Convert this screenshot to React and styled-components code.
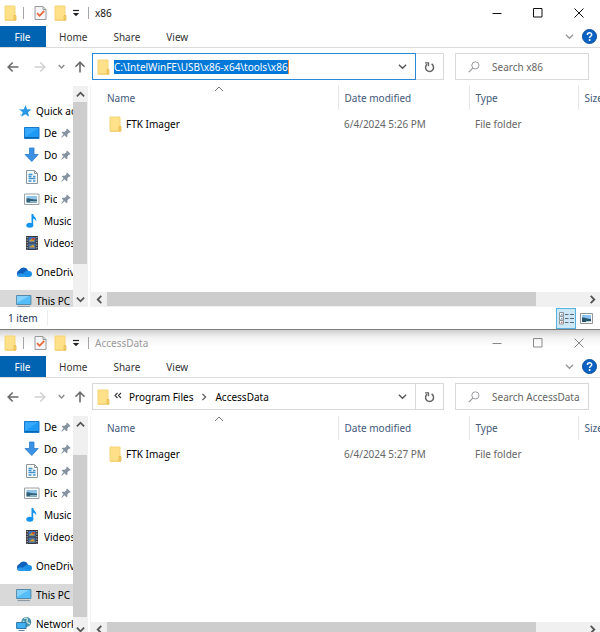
import * as React from "react"
import { useEffect, useRef } from "react"
import { styled, createGlobalStyle } from "styled-components"

const quickItems = [
    { name: 'Desktop', icon: 'desktop', pinned: true },
    { name: 'Downloads', icon: 'downloads', pinned: true },
    { name: 'Documents', icon: 'documents', pinned: true },
    { name: 'Pictures', icon: 'pictures', pinned: true },
    { name: 'Music', icon: 'music' },
    { name: 'Videos', icon: 'videos' },
];

const rootItems = [
    { name: 'OneDrive', icon: 'onedrive' },
    { name: 'This PC', icon: 'pc', selected: true },
    { name: 'Network', icon: 'network' },
];

const FolderIcon = () => (
    <svg width="13" height="16" viewBox="0 0 13 16">
        <path d="M1 1h10v14H1z" fill="#ffe18a" stroke="#f5d478" />
        <path d="M10 10.500h2v4.500h-2z" fill="#f7d36c" stroke="#e6b94c" strokeWidth="0.8" />
        <path d="M1 15.300h11" stroke="#efc65f" strokeWidth="0.8" />
    </svg>
)

const CheckPageIcon = () => (
    <svg width="13" height="16" viewBox="0 0 13 16">
        <path d="M1 1.500h8l3 3v10H1z" fill="#f5f6f9" stroke="#9a9a9a" />
        <path d="M9 1.500v3h3" fill="none" stroke="#9a9a9a" />
        <path d="M3 8.200l2.600 2.600 4.600-5" fill="none" stroke="#e8683a" strokeWidth="1.800" />
    </svg>
)

const CustomizeIcon = () => (
    <svg width="8" height="8" viewBox="0 0 8 8">
        <path d="M1 1.500h6" stroke="#222" strokeWidth="1.200" />
        <path d="M0.800 4h6.400L4 7.200z" fill="#222" />
    </svg>
)

const Chevron = ({ dir = 'down', size = 9, color = '#555', weight = 1.5 }) => {
    const paths = {
        down: 'M1 3l4 4 4-4',
        up: 'M1 7l4-4 4 4',
        left: 'M7 1L3 5l4 4',
        right: 'M3 1l4 4-4 4',
    };
    return (
        <svg width={size} height={size} viewBox="0 0 10 10">
            <path d={paths[dir]} fill="none" stroke={color} strokeWidth={weight} />
        </svg>
    )
}

const OverflowIcon = () => (
    <svg width="8" height="9" viewBox="0 0 8 9">
        <path d="M3.500 1L1 3.500 3.500 6M7 1L4.500 3.500 7 6" fill="none" stroke="#333" strokeWidth="1.100" />
    </svg>
)

const ArrowIcon = ({ dir, color = '#6b6b6b' }) => {
    const paths = {
        left: 'M11.500 6H1.200M5.700 1.500L1.200 6l4.500 4.500',
        right: 'M0.500 6h10.300M6.300 1.500L10.800 6l-4.500 4.500',
        up: 'M6 11.500V1.200M1.500 5.700L6 1.200l4.500 4.500',
    };
    return (
        <svg width="12" height="12" viewBox="0 0 12 12">
            <path d={paths[dir]} fill="none" stroke={color} strokeWidth="1.600" />
        </svg>
    )
}

const RefreshIcon = () => (
    <svg width="11" height="12" viewBox="0 0 11 12">
        <path d="M3.200 3.200A4 4 0 1 0 7.600 3" fill="none" stroke="#666" strokeWidth="1.500" />
        <path d="M1 1.800h3.500v3.400" fill="none" stroke="#666" strokeWidth="1.300" />
    </svg>
)

const SearchIcon = () => (
    <svg width="12" height="12" viewBox="0 0 12 12">
        <circle cx="7.400" cy="4.400" r="3.600" fill="none" stroke="#9a9a9f" />
        <path d="M4.800 7.200L0.800 11.200" stroke="#9a9a9f" strokeWidth="1.200" />
    </svg>
)

const HelpIcon = () => (
    <svg width="15" height="15" viewBox="0 0 15 15">
        <circle cx="7.500" cy="7.500" r="7" fill="#0b62c4" stroke="#0a4f9c" />
        <path d="M5.400 5.900c0-2.800 4.300-2.700 4.300-.2 0 1.600-2.100 1.500-2.100 3.300" fill="none" stroke="#fff" strokeWidth="1.500" />
        <circle cx="7.600" cy="11" r="1" fill="#fff" />
    </svg>
)

const PinIcon = () => (
    <svg width="10" height="10" viewBox="0 0 10 10">
        <path d="M6 0.400L9.700 4l-1 .7-.7-.1-1.600 1.800.1 2-1 .9-1.900-2L.8 9.700l-.5-.4L2.500 6.300.7 4.600l.9-.9 2.100.1L5.500 2.200 5.300 1.300z" fill="#8592a0" />
    </svg>
)

const NavIcon = ({ name }) => (
    <svg width="16" height="16" viewBox="0 0 16 16">
        {name === 'star' && (
            <>
                <path d="M9.500 2l1.600 4.200 4.400.300-3.500 2.800 1.200 4.500-3.900-2.500-3.900 2.500 1.300-4.500L3.300 6.500l4.500-.3z" fill="#2698e4" />
                <path d="M3 6.500h3M4 12h2" stroke="#7cc4f2" />
            </>
        )}
        {name === 'desktop' && (
            <>
                <path d="M.5 2.500h14.500v11H.5z" fill="#1e9af5" stroke="#1779c9" />
                <path d="M1 3h13.500L1 12z" fill="#36a8fb" />
                <path d="M1 12.500h13.500" stroke="#0b66b0" />
            </>
        )}
        {name === 'downloads' && (
            <path d="M5.500 1h4.500v6.500h4.200L7.800 14.500 1 7.500h4.500z" fill="#3b92e4" stroke="#2a7ccb" strokeWidth="0.800" />
        )}
        {name === 'documents' && (
            <>
                <path d="M2.500 1.500h8l3 3v10h-11z" fill="#fbfbfb" stroke="#8d959c" />
                <path d="M10.500 1.500v3h3" fill="none" stroke="#8d959c" />
                <path d="M4.500 5.500h4M4.500 7.500h3M9 7.500h2.500M4.500 9.500h7M4.500 12h3M9 12h2.500" stroke="#3f94cf" strokeWidth="1.300" />
            </>
        )}
        {name === 'pictures' && (
            <>
                <path d="M.5 3h14.500v10.500H.5z" fill="#fff" stroke="#98a1a8" />
                <path d="M2.500 5h10.500v6.500H2.500z" fill="#8ec3ea" />
                <path d="M2.500 7.500c3-1 5 1.500 10.500 1v3H2.500z" fill="#315f78" />
                <path d="M6 10h7v1.500H6z" fill="#8db7c4" />
            </>
        )}
        {name === 'music' && (
            <>
                <ellipse cx="5.800" cy="12.300" rx="3.500" ry="2.500" fill="#1294ee" />
                <path d="M7.500 1h1.700c.3 3 4 3.500 2.900 7.700-.300-2-1.600-2.700-2.900-2.900v6.500H7.500z" fill="#1294ee" />
            </>
        )}
        {name === 'videos' && (
            <>
                <path d="M2 1h12v14H2z" fill="#38383d" />
                <path d="M4.500 2h7v5.500h-7z" fill="#3973bd" />
                <path d="M4.500 8.500h7V14h-7z" fill="#4a72a5" />
                <path d="M5 6l3-2.500 3 3H5zM5 12.500l4-3 2 3z" fill="#d09a35" />
                <path d="M8 3h3v2H8z" fill="#b8523a" />
                <path d="M3.200 2v13M12.800 2v13" stroke="#c8c8c8" strokeWidth="1" strokeDasharray="1.200 1.300" />
            </>
        )}
        {name === 'onedrive' && (
            <>
                <path d="M3 12.500A3.500 3.500 0 0 1 3.300 6 4.800 4.800 0 0 1 12 6.500l-3 6z" fill="#0f5fbd" />
                <path d="M3 12.800L10 7a3 3 0 0 1 3 0 3 3 0 0 1 0 6z" fill="#1b8fe8" />
                <path d="M1 11.500c1-2.500 4-3 6-1.500l5 2.800H3.500c-1.300 0-2-.4-2.500-1.300z" fill="#2899ea" />
            </>
        )}
        {name === 'pc' && (
            <>
                <path d="M.6 2.500h14.300v9H.6z" fill="#55bdf8" stroke="#5689a8" />
                <path d="M1 3h12L1 10z" fill="#83d2fd" />
                <path d="M1.500 13.500h12.500" stroke="#8d9ba6" strokeWidth="1.200" />
            </>
        )}
        {name === 'network' && (
            <>
                <circle cx="10.300" cy="6" r="5" fill="#4c93ae" />
                <path d="M8 2.500c3-1.500 4 1 3 2.500s2 2 3 3M7 5l2 2" fill="none" stroke="#bfe0e3" strokeWidth="1.300" />
                <path d="M.6 6.500h9.500v6H.6z" fill="#40b0f2" stroke="#2d79a8" />
                <path d="M2.500 14.500h6" stroke="#5f88a2" />
            </>
        )}
    </svg>
)

const DetailsIcon = () => (
    <svg width="15" height="13" viewBox="0 0 15 13">
        <path d="M.5.500h4v3.500h-4zM.5 4.500h4V8h-4zM.5 8.500h4V12h-4z" fill="#fff" stroke="#8d9296" />
        <path d="M2 2.300h1.500M2 6.300h1.500" stroke="#4c78b3" />
        <path d="M2 10.300h1.500" stroke="#c23a3a" />
        <path d="M6 2.500h3.500M11 2.500h4M6 6.500h3.500M11 6.500h4M6 10.500h3.500M11 10.500h4" stroke="#5d6b73" />
    </svg>
)

const ThumbsIcon = () => (
    <svg width="13" height="11" viewBox="0 0 13 11">
        <path d="M.5.500h12v10H.5z" fill="#fff" stroke="#8f9598" />
        <path d="M2 2h9v7H2z" fill="#8dc3f4" />
        <path d="M2 4.500c3-.5 5 1.500 9 1.500v3H2z" fill="#27556c" />
        <path d="M6 8h5v1H6z" fill="#a9d3da" />
    </svg>
)

const NavRow = ({ item, level }) => (
    <NavItem $selected={item.selected}>
        <NavLink href="#" $level={level}>
            <NavIcon name={item.icon} />
            <NavText $pinned={item.pinned}>{item.name}</NavText>
            {item.pinned && <PinIcon />}
        </NavLink>
    </NavItem>
)

const AddressInput = ({ path }) => {
    const input = useRef(null);

    useEffect(() => {
        input.current.focus();
        input.current.select();
    }, []);

    return <PathInput ref={input} aria-label="Address" defaultValue={path} spellCheck={false} />
}

const ExplorerWindow = ({ title, active, path, crumbs, modified, showQuick, thumbTop }) => (
    <Window>
        <TitleBar $active={active}>
            <FolderIcon />
            <Divider />
            <QuickButton aria-label="Properties"><CheckPageIcon /></QuickButton>
            <QuickButton aria-label="New folder"><FolderIcon /></QuickButton>
            <QuickButton aria-label="Customize" $narrow><CustomizeIcon /></QuickButton>
            <Divider />
            <Title $active={active}>{title}</Title>
            <WindowButtons $active={active}>
                <WindowButton aria-label="Minimize">
                    <svg width="10" height="10"><path d="M0.500 5.500h9" stroke="currentColor" /></svg>
                </WindowButton>
                <WindowButton aria-label="Maximize">
                    <svg width="10" height="10"><path d="M.5.500h8.500v8.500H.5z" fill="none" stroke="currentColor" /></svg>
                </WindowButton>
                <WindowButton aria-label="Close">
                    <svg width="10" height="10"><path d="M.5.500l9 9M9.500.500l-9 9" stroke="currentColor" /></svg>
                </WindowButton>
            </WindowButtons>
        </TitleBar>

        <Ribbon>
            <FileTab>File</FileTab>
            <Tab>Home</Tab>
            <Tab>Share</Tab>
            <Tab>View</Tab>
            <RibbonEnd>
                <IconButton aria-label="Expand ribbon"><Chevron color="#999" /></IconButton>
                <IconButton aria-label="Help"><HelpIcon /></IconButton>
            </RibbonEnd>
        </Ribbon>

        <AddressRow>
            <HistoryButtons>
                <IconButton aria-label="Back"><ArrowIcon dir="left" /></IconButton>
                <IconButton aria-label="Forward"><ArrowIcon dir="right" color="#d2d2d2" /></IconButton>
                <IconButton aria-label="Recent"><Chevron size={7} color="#888" weight={2} /></IconButton>
                <IconButton aria-label="Up"><ArrowIcon dir="up" /></IconButton>
            </HistoryButtons>
            <AddressBox $active={active}>
                <FolderIcon />
                {path && <AddressInput path={path} />}
                {crumbs && (
                    <Crumbs aria-label="Address">
                        <IconButton aria-label="Parent folders"><OverflowIcon /></IconButton>
                        {crumbs.map((crumb, i) => (
                            <React.Fragment key={crumb}>
                                {i > 0 && <Chevron dir="right" size={8} />}
                                <Crumb>{crumb}</Crumb>
                            </React.Fragment>
                        ))}
                    </Crumbs>
                )}
                <IconButton aria-label="Previous locations"><Chevron /></IconButton>
            </AddressBox>
            <RefreshButton aria-label="Refresh"><RefreshIcon /></RefreshButton>
            <SearchBox>
                <SearchIcon />
                <SearchInput aria-label="Search" placeholder={'Search ' + title} />
            </SearchBox>
        </AddressRow>

        <Content>
            <Sidebar>
                <NavList $padded={showQuick}>
                    {showQuick && <NavRow item={{ name: 'Quick access', icon: 'star' }} level={0} />}
                    {quickItems.map((item) => <NavRow key={item.name} item={item} level={1} />)}
                    {rootItems.map((item) => (
                        <React.Fragment key={item.name}>
                            <NavGap role="presentation" />
                            <NavRow item={item} level={0} />
                        </React.Fragment>
                    ))}
                </NavList>
            </Sidebar>
            <VScroll>
                <ScrollArrow aria-label="Scroll up"><Chevron dir="up" weight={2} /></ScrollArrow>
                <VTrack style={{ paddingTop: thumbTop }}><VThumb /></VTrack>
                <ScrollArrow aria-label="Scroll down"><Chevron weight={2} /></ScrollArrow>
            </VScroll>
            <Main>
                <Files>
                    <thead>
                        <tr>
                            <HeadCell $width={247}>
                                Name
                                <SortMark><Chevron dir="up" size={10} color="#777" weight={1} /></SortMark>
                            </HeadCell>
                            <HeadCell $width={131}>Date modified</HeadCell>
                            <HeadCell $width={109}>Type</HeadCell>
                            <HeadCell>Size</HeadCell>
                        </tr>
                    </thead>
                    <tbody>
                        <tr>
                            <Cell $name><FileName><FolderIcon />FTK Imager</FileName></Cell>
                            <Cell>{modified}</Cell>
                            <Cell>File folder</Cell>
                            <Cell />
                        </tr>
                    </tbody>
                </Files>
                <HScroll>
                    <ScrollArrow aria-label="Scroll left"><Chevron dir="left" weight={2} /></ScrollArrow>
                    <HTrack><HThumb /></HTrack>
                    <ScrollArrow aria-label="Scroll right"><Chevron dir="right" weight={2} /></ScrollArrow>
                </HScroll>
            </Main>
        </Content>

        <StatusBar>
            <StatusText>1 item</StatusText>
            <ViewButton aria-label="Details" $on><DetailsIcon /></ViewButton>
            <ViewButton aria-label="Large icons"><ThumbsIcon /></ViewButton>
        </StatusBar>
    </Window>
)

export default function App() {
    return (
        <Screen>
            <GlobalStyle />
            <ExplorerWindow
                title="x86"
                active
                path="C:\IntelWinFE\USB\x86-x64\tools\x86"
                modified="6/4/2024 5:26 PM"
                showQuick
                thumbTop={0}
            />
            <ExplorerWindow
                title="AccessData"
                crumbs={['Program Files', 'AccessData']}
                modified="6/4/2024 5:27 PM"
                thumbTop={23}
            />
        </Screen>
    )
}

const GlobalStyle = createGlobalStyle`
    *{
        box-sizing:border-box;
    }

    body{
        margin:0;
        background:#fff;
        font-family:"Noto Sans", "Open Sans", sans-serif;
        font-size:10px;
        line-height:16px;
        color:#000;
    }

    button, input{
        font:inherit;
        color:inherit;
        margin:0;
        padding:0;
        border:0;
        background:none;
    }

    svg{
        display:block;
        flex:none;
    }
`

const Screen = styled.main`
    height:100vh;
    overflow:hidden;
`

const Window = styled.section`
    display:flex;
    flex-direction:column;
    background:#fff;
    border-bottom:1px solid #7d7d7d;
`

const TitleBar = styled.header`
    display:flex;
    align-items:center;
    height:26px;
    padding-left:4px;
    background:${({$active}) => $active ? '#fff' : 'linear-gradient(#cfcfcf, #f1f1f1 7px, #fff 16px)'};
`

const Divider = styled.span`
    width:1px;
    height:12px;
    margin:0 6px;
    background:#a5a5a5;
`

const QuickButton = styled.button`
    display:flex;
    justify-content:center;
    width:${({$narrow}) => $narrow ? 12 : 20}px;
`

const Title = styled.h1`
    flex:1;
    margin:0;
    font-size:10px;
    font-weight:400;
    color:${({$active}) => $active ? '#111' : '#999'};
`

const WindowButtons = styled.div`
    display:flex;
    padding-right:1px;
    color:${({$active}) => $active ? '#111' : '#888'};
`

const WindowButton = styled.button`
    display:flex;
    justify-content:center;
    width:41px;
`

const Ribbon = styled.nav`
    display:flex;
    height:22px;
    border-bottom:1px solid #dcdcdc;
`

const Tab = styled.button`
    padding:0 13px;
    color:#333;
`

const FileTab = styled(Tab)`
    width:46px;
    padding:0 1px 0 0;
    color:#fff;
    background:#0063b1;
`

const RibbonEnd = styled.div`
    display:flex;
    align-items:center;
    gap:8px;
    margin-left:auto;
    padding-right:3px;
`

const IconButton = styled.button`
    display:flex;
    align-items:center;
    justify-content:center;
`

const AddressRow = styled.div`
    display:flex;
    height:38px;
    padding:5px 11px 6px 0;
`

const HistoryButtons = styled.div`
    display:grid;
    grid-template-columns:26px 28px 14px 24px;
    width:92px;
`

const AddressBox = styled.div`
    display:flex;
    flex:1;
    align-items:center;
    min-width:0;
    padding:0 8px 0 4px;
    border:1px solid ${({$active}) => $active ? '#2b88d8' : '#d9d9d9'};
`

const PathInput = styled.input`
    field-sizing:content;
    height:14px;
    margin:0 auto 0 4px;
    outline:0;
    border-right:1px solid #f08a3c;
    caret-color:transparent;

    &::selection{
        color:#fff;
        background:#0078d7;
    }
`

const Crumbs = styled.nav`
    display:flex;
    flex:1;
    align-items:center;
    gap:7px;
    margin-left:4px;
`

const Crumb = styled.button`
    white-space:nowrap;
`

const RefreshButton = styled(IconButton)`
    width:28px;
    border:1px solid #d9d9d9;
    border-left:0;
`

const SearchBox = styled.label`
    display:flex;
    align-items:center;
    gap:12px;
    width:134px;
    margin-left:11px;
    padding-left:12px;
    border:1px solid #d9d9d9;
`

const SearchInput = styled.input`
    flex:1;
    min-width:0;
    outline:0;

    &::placeholder{
        color:#666;
        opacity:1;
    }
`

const Content = styled.div`
    display:flex;
    height:221px;
`

const Sidebar = styled.nav`
    width:73px;
    overflow:hidden;
`

const NavList = styled.ul`
    margin:0;
    padding:${({$padded}) => $padded ? '14px' : '0'} 0 0;
    list-style:none;
`

const NavItem = styled.li`
    height:22px;
    overflow:hidden;
    background:${({$selected}) => $selected ? '#d9d9d9' : 'none'};
`

const NavLink = styled.a`
    display:flex;
    align-items:center;
    gap:4px;
    height:22px;
    padding-left:${({$level}) => $level ? 24 : 16}px;
    color:inherit;
    text-decoration:none;
`

const NavText = styled.span`
    flex:none;
    width:${({$pinned}) => $pinned ? '13px' : 'auto'};
    overflow:hidden;
    white-space:nowrap;
`

const NavGap = styled.li`
    height:7px;
`

const VScroll = styled.div`
    display:flex;
    flex-direction:column;
    width:15px;
    background:#f0f0f0;
`

const ScrollArrow = styled(IconButton)`
    flex:none;
    min-width:15px;
    min-height:15px;
    flex-basis:16px;
`

const VTrack = styled.div`
    flex:1;
`

const VThumb = styled.div`
    height:162px;
    margin-right:1px;
    background:#cdcdcd;
`

const Main = styled.div`
    display:flex;
    flex:1;
    flex-direction:column;
    min-width:0;
    margin-left:2px;
    border-left:1px solid #f3f3f3;
`

const Files = styled.table`
    width:100%;
    table-layout:fixed;
    border-collapse:collapse;
`

const HeadCell = styled.th`
    position:relative;
    width:${({$width}) => $width ? $width + 'px' : 'auto'};
    height:24px;
    padding:0 0 0 6px;
    border-right:1px solid #e5e5e5;
    font-weight:400;
    text-align:left;
    white-space:nowrap;
    color:#43587a;

    &:first-child{
        padding-left:16px;
    }

    &:last-child{
        border-right:0;
    }
`

const SortMark = styled.span`
    position:absolute;
    top:-2px;
    left:50%;
`

const Cell = styled.td`
    height:28px;
    padding:0 0 0 6px;
    color:${({$name}) => $name ? '#000' : '#666'};

    &:first-child{
        padding-left:18px;
    }
`

const FileName = styled.span`
    display:flex;
    align-items:center;
    gap:4px;
`

const HScroll = styled.div`
    display:flex;
    margin-top:auto;
    background:#f0f0f0;
`

const HTrack = styled.div`
    flex:1;
`

const HThumb = styled.div`
    width:90%;
    height:14px;
    background:#cdcdcd;
`

const StatusBar = styled.footer`
    display:flex;
    align-items:center;
    height:22px;
    padding-right:4px;
`

const StatusText = styled.span`
    margin-right:auto;
    padding:0 9px 0 8px;
    border-right:1px solid #ededed;
    color:#1f3357;
`

const ViewButton = styled(IconButton)`
    width:20px;
    height:21px;
    border:1px solid ${({$on}) => $on ? '#58b0dc' : 'transparent'};
    background:${({$on}) => $on ? '#cce8f6' : 'none'};
`
